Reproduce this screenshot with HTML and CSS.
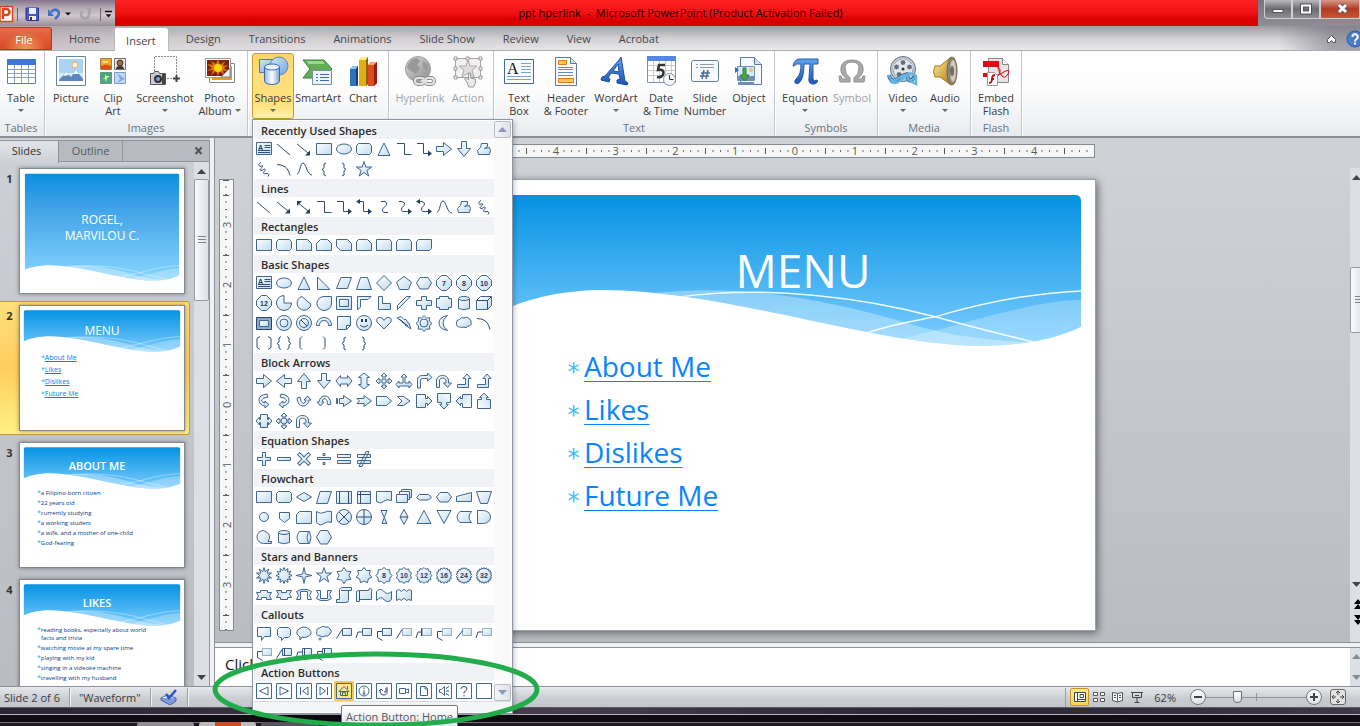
FILE: index.html
```html
<!DOCTYPE html>
<html lang="en">
<head>
<meta charset="utf-8">
<title>ppt hperlink - Microsoft PowerPoint</title>
<link rel="stylesheet" href="styles.css">
</head>
<body>
<svg class="defs" aria-hidden="true">
  <defs>
    <linearGradient id="fill" x1="0" y1="0" x2="1" y2="1"><stop offset="0" stop-color="#fff"/><stop offset="1" stop-color="#bfdcf0"/></linearGradient>
    <linearGradient id="blue" x1="0" y1="0" x2="1" y2="1"><stop offset="0" stop-color="#d5e7fa"/><stop offset="1" stop-color="#6ea4e0"/></linearGradient>
    <linearGradient id="cyl" x1="0" y1="0" x2="1" y2="0"><stop offset="0" stop-color="#8db9e8"/><stop offset=".5" stop-color="#fff"/><stop offset="1" stop-color="#7aa8dd"/></linearGradient>
    <linearGradient id="deep" x1="0" y1="0" x2="0" y2="1"><stop offset="0" stop-color="#5fa1ee"/><stop offset="1" stop-color="#1c53b5"/></linearGradient>
    <linearGradient id="gold" x1="0" y1="0" x2="1" y2="1"><stop offset="0" stop-color="#fff3a0"/><stop offset="1" stop-color="#b07a10"/></linearGradient>
    <linearGradient id="gray" x1="0" y1="0" x2="1" y2="1"><stop offset="0" stop-color="#d8d8d8"/><stop offset="1" stop-color="#8e8e8e"/></linearGradient>
    <linearGradient id="sky" gradientUnits="userSpaceOnUse" x1="0" y1="15" x2="0" y2="166"><stop offset="0" stop-color="#0592e2"/><stop offset="1" stop-color="#7ccdff"/></linearGradient>
    <linearGradient id="skytall" gradientUnits="userSpaceOnUse" x1="0" y1="-224" x2="0" y2="166"><stop offset="0" stop-color="#0a8fe0"/><stop offset=".3" stop-color="#3fa1e6"/><stop offset="1" stop-color="#86d6ff"/></linearGradient>
    <clipPath id="wave"><path d="M14 21q0-6 6-6H580q6 0 6 6V147C560 160 525 166 486 166C380 166 230 110 109 110C70 110 35 118 14 128Z"/></clipPath>
    <g id="swirl" clip-path="url(#wave)">
      <path fill="#fff" fill-opacity=".32" d="M160 113C250 104 330 118 432 149C470 158 500 161 540 163V200H160Z"/>
      <path fill="#fff" fill-opacity=".25" d="M405 159C470 145 530 122 586 120V200H405z"/>
      <path fill="none" stroke="#fff" stroke-width="1.5" stroke-opacity=".9" d="M185 117C270 105 370 118 440 137S510 155 545 164M362 156C400 143 420 141 440 137C490 122 540 113 586 111"/>
    </g>
    <symbol id="content-bg" viewBox="0 0 600 450" preserveAspectRatio="none">
      <path fill="url(#sky)" d="M14 21q0-6 6-6H580q6 0 6 6V147C560 160 525 166 486 166C380 166 230 110 109 110C70 110 35 118 14 128Z"/>
      <use href="#swirl"/>
    </symbol>
    <symbol id="title-bg" viewBox="0 0 600 450" preserveAspectRatio="none">
      <g transform="translate(0 239)">
        <path fill="url(#skytall)" d="M18-218q0-4 4-4H578q4 0 4 4V147C560 160 525 166 486 166C380 166 230 110 109 110C70 110 35 118 18 126Z"/>
        <use href="#swirl"/>
      </g>
    </symbol>
  </defs>
</svg>

<header class="titlebar">
  <div class="quick">
    <svg class="quick-art" viewBox="0 0 115 26" aria-hidden="true">
      <path d="M0 6.500h12.500v15H0z" fill="#fff" stroke="#d2491c" stroke-width="1.500"/>
      <path d="M3 19V9h3.500a2.800 2.800 0 0 1 0 6H3" fill="none" stroke="#d2491c" stroke-width="2.500"/>
      <path d="M17.500 8v13M100.500 8v13" stroke="#6b6473"/>
      <path d="M26 8h12.500v12.500H27l-1-1z" fill="#4a55c4" stroke="#2c3590"/><path d="M29 8h7v6h-7z" fill="#e8ecff"/><path d="M29 16h7v4h-7z" fill="#eee"/><path d="M30 17h2v3h-2z" fill="#333"/>
      <path d="M51 12q4-4 7-1t-3 8" fill="none" stroke="#3c6fd0" stroke-width="2.600"/><path d="M48 9v7h6z" fill="#3c6fd0"/>
      <path d="M65 12.500h6l-3 3z" fill="#111"/>
      <path d="M89 11v4a4 4 0 1 1-6-4" fill="none" stroke="#aaa4aa" stroke-width="2.600"/><path d="M85 8h6v6z" fill="#aaa4aa"/>
      <path d="M105 11.500h7" stroke="#111" stroke-width="1.500"/><path d="M105 14h7l-3.500 4z" fill="#111" stroke="#fff" stroke-width=".5"/>
    </svg>
  </div>
  <h1 class="window-title">ppt hperlink&nbsp; -&nbsp; Microsoft PowerPoint (Product Activation Failed)</h1>
  <div class="window-buttons">
    <button type="button" aria-label="Minimize"><svg width="12" height="12"><path d="M1 6.500h10v3H1z" fill="#fff" stroke="#555"/></svg></button>
    <button type="button" aria-label="Restore"><svg width="12" height="12"><path d="M2 2.500h8v7H2z" fill="none" stroke="#555" stroke-width="4"/><path d="M2 2.500h8v7H2z" fill="none" stroke="#fff" stroke-width="2"/></svg></button>
    <button type="button" class="close" aria-label="Close"><svg width="14" height="12"><path d="M3 2l7 7M10 2l-7 7" stroke="#555" stroke-width="5"/><path d="M3 2l7 7M10 2l-7 7" stroke="#fff" stroke-width="3"/></svg></button>
  </div>
</header>

<nav class="tabs">
  <button type="button" class="file">File</button>
  <button type="button">Home</button>
  <button type="button" class="active">Insert</button>
  <button type="button">Design</button>
  <button type="button">Transitions</button>
  <button type="button">Animations</button>
  <button type="button">Slide Show</button>
  <button type="button">Review</button>
  <button type="button">View</button>
  <button type="button">Acrobat</button>
  <span class="tabs-end">
    <svg width="12" height="10" viewBox="0 0 12 10"><path d="M1.500 8.500v-3l4-4 4 4v3h-2l-2-2-2 2z" fill="#fff" stroke="#555"/></svg>
    <svg width="14" height="18" viewBox="0 0 14 18"><circle cx="9" cy="9" r="8" fill="#4a7cc9" stroke="#2d5ca8"/><path d="M6.500 7a2.600 2.600 0 1 1 4 2Q9 10 9 11.500" fill="none" stroke="#fff" stroke-width="2"/><path d="M8 12.500h2v2H8z" fill="#fff"/></svg>
  </span>
</nav>

<section class="ribbon">
  <div class="group first">
    <div class="cmds">
      <button type="button" class="cmd"><svg class="ico" viewBox="0 0 32 32"><path d="M2.500 3.500h28v24h-28z" fill="#fff" stroke="#5a7fb5"/><path d="M2 3h29v6H2z" fill="#3d78d6"/><path d="M3 13.500h27M3 17.500h27M3 21.500h27M9.500 9v18M16.500 9v18M23.500 9v18" stroke="#8fa0b5"/></svg><span>Table</span><i class="caret"></i></button>
    </div>
    <h2>Tables</h2>
  </div>
  <div class="group">
    <div class="cmds images">
      <button type="button" class="cmd"><svg class="ico" viewBox="0 0 32 32"><path d="M1.500.5h29v29h-29z" fill="#fff" stroke="#64869f"/><path d="M4 3h24v22H4z" fill="#a9d4f5"/><path d="M4 17h24v8H4z" fill="#d8edfb"/><path d="M4 24l7-8 5 5 5-7 7 9v2H4z" fill="#5a86b9"/><path d="M8 20l3-4 3 3zM18 18l3-4 3 4z" fill="#fff"/><circle cx="20" cy="9" r="3" fill="#fff7d8" stroke="#eaa860"/></svg><span>Picture</span></button>
      <button type="button" class="cmd"><svg class="ico" viewBox="0 0 32 32"><path d="M3.500 2.500h11v11h-11z" fill="#f2a722" stroke="#a47a50"/><path d="M4 10q5-3 10 0v3H4z" fill="#d9501a"/><path d="M6 5h5v2H6z" fill="#ffe98a"/><path d="M17.500 2.500h11v11h-11z" fill="#e6e6e6" stroke="#777"/><circle cx="23" cy="7" r="3" fill="#b06a38" stroke="#333"/><path d="M19 13q0-3 4-3t4 3z" fill="#333"/><path d="M3.500 16.500h11v11h-11z" fill="#4ea582" stroke="#61967f"/><path d="M8 18v4h-3l3 1 1 3 1-4 3-2-4 0z" fill="#e7f78a"/><path d="M17.500 16.500h11v11h-11z" fill="#c3daf7" stroke="#7c9ccc"/><path d="M20 17l8 6-8 4 3-4z" fill="#7fa9e8"/></svg><span>Clip<br>Art</span></button>
      <button type="button" class="cmd w62"><svg class="ico" viewBox="0 0 32 32"><path d="M5.500 15V.5h22v22h-10" fill="none" stroke="#8b8b98" stroke-dasharray="2 1"/><path d="M24 22.500h7M27.500 19v7" stroke="#445" stroke-width="2"/><path d="M1.500 17.500h3l1-2h4l1 2h6v11h-15z" fill="#c9ccd3" stroke="#555"/><circle cx="9" cy="23" r="4" fill="#333"/><circle cx="9" cy="23" r="2" fill="#78a6d8"/><path d="M13 18h3v10h-3z" fill="#444"/></svg><span>Screenshot</span><i class="caret"></i></button>
      <button type="button" class="cmd w48"><svg class="ico" viewBox="0 0 32 32"><path d="M5.500 7.500h25v19h-25z" fill="#fff" stroke="#888"/><path d="M8 10h20v14H8z" fill="#ee9b16"/><path d="M1.500 2.500h25v19h-25z" fill="#fff" stroke="#999"/><path d="M3 4h22v16H3z" fill="#7b2208"/><path d="M14 3l2 6 5-4-2 5 6-1-5 3 5 4-6-2 1 5-4-4-2 5-2-5-5 4 2-5-6 1 5-3-5-4 6 1-2-4 5 3z" fill="#e07410"/><circle cx="14" cy="12" r="4" fill="#f5d60c"/><path d="M17 21l9-9v9z" fill="#eef2f8" stroke="#888"/></svg><span>Photo<br>Album <i class="caret inline"></i></span></button>
    </div>
    <h2>Images</h2>
  </div>
  <div class="group">
    <div class="cmds">
      <div class="dropdown">
        <button type="button" class="cmd pressed" aria-expanded="true"><svg class="ico" viewBox="0 0 32 32"><path d="M2.500 3.500h16v13h-16z" fill="url(#blue)" stroke="#5279ad"/><circle cx="22" cy="10" r="9" fill="url(#blue)" stroke="#5a86c0"/><path d="M7.500 11v14a7.500 3.500 0 0 0 15 0V11z" fill="url(#cyl)" stroke="#3f6bab"/><ellipse cx="15" cy="11" rx="7.500" ry="3" fill="#e9f3fd" stroke="#3f6bab"/></svg><span>Shapes</span><i class="caret"></i></button>
        <div class="menu" role="menu">
          <div class="menu-body">
            <div class="gallery" id="gallery"></div>
            <div class="menu-scroll">
              <button type="button" aria-label="Scroll up"><svg width="9" height="5"><path d="M0 5l4.500-5L9 5z" fill="#8b97c0"/></svg></button>
              <button type="button" aria-label="Scroll down"><svg width="9" height="5"><path d="M0 0l4.500 5L9 0z" fill="#8b97c0"/></svg></button>
            </div>
          </div>
          <div class="menu-grip"></div>
          <div class="tooltip" role="tooltip">Action Button: Home</div>
          <svg class="marker" viewBox="0 0 328 77" aria-hidden="true"><ellipse cx="164" cy="38.500" rx="161" ry="35.500" fill="none" stroke="#22ac4b" stroke-width="5"/></svg>
        </div>
      </div>
      <button type="button" class="cmd w48"><svg class="ico" viewBox="0 0 32 32"><path d="M1 4h21l8 9-8 9H1l7-9z" fill="#63ad55" stroke="#3c8341"/><path d="M4 5h17l2 3H7z" fill="#a2d58b"/><path d="M10.500 14.500h19v14h-19z" fill="#eef4f9" stroke="#7690a5"/><path d="M14 18.500h2M14 21.500h2M14 24.500h2M18 18.500h9M18 21.500h9M18 24.500h9" stroke="#456ea8"/></svg><span>SmartArt</span></button>
      <button type="button" class="cmd"><svg class="ico" viewBox="0 0 32 32"><path d="M3 13l3-3h5v20H3z" fill="#2f73b8"/><path d="M3 13l3-3h5l-2 3z" fill="#8ec6f0"/><path d="M9 13l2-3v18l-2 2z" fill="#153f73"/><path d="M12 4l3-3h6v27l-2 2h-7z" fill="#e0b010"/><path d="M12 4l3-3h6l-2 3z" fill="#fff07a"/><path d="M19 4l2-3v27l-2 2z" fill="#8b6406"/><path d="M21 9l3-3h6v21l-3 3h-6z" fill="#dd4a1f"/><path d="M21 9l3-3h6l-3 3z" fill="#ffa07a"/><path d="M27 9l3-3v21l-3 3z" fill="#931f06"/></svg><span>Chart</span></button>
    </div>
  </div>
  <div class="group">
    <div class="cmds">
      <button type="button" class="cmd w54" disabled><svg class="ico" viewBox="0 0 32 32"><circle cx="14" cy="13" r="12.500" fill="url(#gray)" stroke="#9c9c9c"/><path d="M4 8q3-6 9-6l3 3-3 4 3 3-4 6-5-3-4-3zM19 5l5 4-1 7-4-5z" fill="#999"/><g fill="none" stroke="#8e8e8e" stroke-width="4"><rect x="11" y="22" width="9" height="6" rx="3"/><rect x="21" y="22" width="9" height="6" rx="3"/></g><g fill="none" stroke="#e4e4e4" stroke-width="2"><rect x="11" y="22" width="9" height="6" rx="3"/><rect x="21" y="22" width="9" height="6" rx="3"/><path d="M17 25h7"/></g></svg><span>Hyperlink</span></button>
      <button type="button" class="cmd" disabled><svg class="ico" viewBox="0 0 32 32"><path d="M3.500 2.500h25v19h-25z" fill="#f3eeef" stroke="#a5a5a5"/><path d="M16 4l2 6h7l-5 4 2 7-6-4-6 4 2-7-5-4h7z" fill="#e2dde0" stroke="#aaa"/><path d="M2 1h3v3H2zM14 1h3v3h-3zM27 1h3v3h-3zM2 11h3v3H2zM27 11h3v3h-3zM2 20h3v3H2zM27 20h3v3h-3z" fill="#f5f5f5" stroke="#999"/><path d="M15.500 27l-3-4 2-1 2 2v-7h2v5l5 1v4l-2 4h-5z" fill="#e9e9e9" stroke="#999"/></svg><span>Action</span></button>
    </div>
  </div>
  <div class="group">
    <div class="cmds">
      <button type="button" class="cmd"><svg class="ico" viewBox="0 0 32 32"><path d="M1.500 3.500h29v24h-29z" fill="#f9fcff" stroke="#456a91"/><text x="4" y="18" class="serif" font-size="16">A</text><path d="M18 7.500h10M18 10.500h10M18 13.500h10M18 16.500h10M4 20.500h24M4 23.500h24" stroke="#7ea0d4"/></svg><span>Text<br>Box</span></button>
      <button type="button" class="cmd w52"><svg class="ico" viewBox="0 0 32 32"><path d="M5.500 1.500h15l6 6v22h-21z" fill="#f7fbff" stroke="#5a7ba5"/><path d="M20.500 1.500v6h6" fill="#cfe0f5" stroke="#5a7ba5"/><path d="M8.500 4.500h8v4h-8zM8.500 22.500h15v4h-15z" fill="#ffc36c" stroke="#de7b16"/><path d="M8 11.500h15M8 13.500h15M8 16.500h15M8 19.500h15" stroke="#6b87b4"/></svg><span>Header<br>&amp; Footer</span></button>
      <button type="button" class="cmd w48"><svg class="ico" viewBox="0 0 32 32"><path d="M21 1l4 24 3 2-1 2-10-2v-3l3-1-1-5-8-1-3 5 2 1-1 3-8-2 1-3 3-1L19 4zM18 8l-5 7 6 1z" fill="url(#deep)" stroke="#1b4c9c"/></svg><span>WordArt</span><i class="caret"></i></button>
      <button type="button" class="cmd"><svg class="ico" viewBox="0 0 32 32"><path d="M2.500.5h28v26h-28z" fill="#fff" stroke="#7490bb"/><path d="M2 0h29v5H2z" fill="#5487e4"/><path d="M3 9.500h27M3 14.500h27M3 19.500h27M8.500 5v21M14.500 5v21M20.500 5v21M26.500 5v21" stroke="#c3cad4"/><path d="M20 9h-6l-1 5q7-1 5 5-2 3-6 2" fill="none" stroke="#333" stroke-width="2.500"/><circle cx="24.500" cy="23.500" r="6" fill="#f6f8fa" stroke="#8693a5"/><path d="M24.500 19v4.500h4" fill="none" stroke="#333"/></svg><span>Date<br>&amp; Time</span></button>
      <button type="button" class="cmd w46"><svg class="ico" viewBox="0 0 32 32"><rect x="2.500" y="4.500" width="27" height="21" rx="2" fill="#f6f9fd" stroke="#607d9e"/><path d="M7 8.500h2M7 11.500h2M11 8.500h14M11 11.500h14" stroke="#8c9bb0"/><path d="M15 14l-2 9M19 14l-2 9M12 17h9M11 20h9" stroke="#486f9f" stroke-width="1.500"/></svg><span>Slide<br>Number</span></button>
      <button type="button" class="cmd"><svg class="ico" viewBox="0 0 32 32"><path d="M7.500 1.500h14l7 7v20h-21z" fill="#f6faff" stroke="#5a7ba5"/><path d="M21.500 1.500v7h7" fill="#cfe0f5" stroke="#5a7ba5"/><path d="M4.500 10.500h17v14h-17z" fill="#d9eafa" stroke="#6f8fb6"/><circle cx="18" cy="14" r="2" fill="#f5c25b"/><path d="M5 20h16v4H5zM5 26h16v3H5z" fill="#6b8db8"/><path d="M10 12h3v7h3l-4.500 6L7 19h3z" fill="#4fa64a" stroke="#2f7f35"/><path d="M2 11l4 3-4 3z" fill="#2d64d0"/></svg><span>Object</span></button>
    </div>
    <h2>Text</h2>
  </div>
  <div class="group">
    <div class="cmds">
      <button type="button" class="cmd w52"><svg class="ico" viewBox="0 0 32 32"><path d="M4 10q1-6 6-7h19v5h-5v15q1 3 4 1l1 1q-2 4-6 3-4-1-3-6l1-14h-6q0 13-4 18-2 3-5 1-1-3 2-5 4-4 4-14-5-1-7 2z" fill="url(#deep)" stroke="#2b5cae"/></svg><span>Equation</span><i class="caret"></i></button>
      <button type="button" class="cmd" disabled><svg class="ico" viewBox="0 0 32 32"><path d="M3 20h2l1 3h5q-7-5-6-11 1-8 11-8t11 8q1 6-6 11h5l1-3h2l-1 6H18v-4q5-4 5-10 0-6-7-6t-7 6q0 6 5 10v4H4z" fill="#aaa" stroke="#8f8f8f"/></svg><span>Symbol</span></button>
    </div>
    <h2>Symbols</h2>
  </div>
  <div class="group">
    <div class="cmds">
      <button type="button" class="cmd"><svg class="ico" viewBox="0 0 32 32"><circle cx="16" cy="13" r="12.500" fill="#c5cbd3" stroke="#68727f"/><circle cx="16" cy="13" r="10" fill="#e2e6ea" stroke="#9aa4b0"/><g fill="#65717f" stroke="#eef1f4"><circle cx="16" cy="6.500" r="3"/><circle cx="22.500" cy="11" r="3"/><circle cx="20" cy="18.500" r="3"/><circle cx="12" cy="18.500" r="3"/><circle cx="9.500" cy="11" r="3"/></g><circle cx="16" cy="13" r="1.500" fill="#333"/><path d="M2 19q2 9 10 3t9 0 8-2" fill="none" stroke="#2f5f85" stroke-width="4"/><path d="M2 19q2 9 10 3t9 0 8-2M3 25q6 5 13-3t13-2v8l-6-3" fill="none" stroke="#63b4e2" stroke-width="2.500"/></svg><span>Video</span><i class="caret"></i></button>
      <button type="button" class="cmd"><svg class="ico" viewBox="0 0 32 32"><path d="M6 10h5L22 1v28L11 21H6q-3-5 0-11z" fill="url(#gold)" stroke="#a97818"/><ellipse cx="23" cy="15" rx="5" ry="14" fill="#8e8475" stroke="#76664d"/><ellipse cx="24" cy="15" rx="3" ry="11" fill="#cfc9bf"/><ellipse cx="23" cy="15" rx="2" ry="5" fill="#716a60"/></svg><span>Audio</span><i class="caret"></i></button>
    </div>
    <h2>Media</h2>
  </div>
  <div class="group">
    <div class="cmds">
      <button type="button" class="cmd"><svg class="ico" viewBox="0 0 32 32"><path d="M8.500 2.500h14l6 6v18h-20z" fill="#e5e5e5" stroke="#888"/><path d="M22.500 2.500v6h6" fill="#fff" stroke="#888"/><path d="M3 5h16v6H3zM3 17h9v4H3z" fill="#e30613"/><path d="M17 20q5-5 2-8t1 5 8 1-6-1-8 4" fill="none" stroke="#e30613"/><path d="M7.500 16.500h7l3 3v10h-10z" fill="#fff" stroke="#999"/><path d="M15 19q-3 0-3 4t-3 4M11 23h3" fill="none" stroke="#d20a14" stroke-width="1.800"/></svg><span>Embed<br>Flash</span></button>
    </div>
    <h2>Flash</h2>
  </div>
</section>

<main class="work">
  <aside class="panel">
    <div class="panel-tabs">
      <button type="button" class="active">Slides</button>
      <button type="button">Outline</button>
      <button type="button" class="panel-close" aria-label="Close pane"><svg width="10" height="10"><path d="M1.500 1.500l6 6.500M7.500 1.500l-6 6.500" stroke="#555" stroke-width="2"/></svg></button>
    </div>
    <div class="panel-body">
      <ol class="thumbs">
        <li><b>1</b><div class="thumb title"><svg><use href="#title-bg"/></svg><div class="thumb-text"><h3>ROGEL,<br>MARVILOU C.</h3></div></div></li>
        <li class="selected"><b>2</b><div class="thumb links"><svg><use href="#content-bg"/></svg><div class="thumb-text"><h3>MENU</h3><ul><li><u>About Me</u></li><li><u>Likes</u></li><li><u>Dislikes</u></li><li><u>Future Me</u></li></ul></div></div></li>
        <li><b>3</b><div class="thumb"><svg><use href="#content-bg"/></svg><div class="thumb-text"><h3>ABOUT ME</h3><ul><li>a Filipino-born citizen</li><li>22 years old</li><li>currently studying</li><li>a working student</li><li>a wife, and a mother of one-child</li><li>God-fearing</li></ul></div></div></li>
        <li><b>4</b><div class="thumb"><svg><use href="#content-bg"/></svg><div class="thumb-text"><h3>LIKES</h3><ul><li>reading books, especially about world<br>facts and trivia</li><li>watching movie at my spare time</li><li>playing with my kid</li><li>singing in a videoke machine</li><li>travelling with my husband</li></ul></div></div></li>
      </ol>
      <div class="panel-scroll">
        <svg width="9" height="5"><path d="M0 5l4.500-5L9 5z" fill="#444"/></svg>
        <span class="panel-grab"></span>
        <svg class="down-arrow" width="9" height="5"><path d="M0 0l4.500 5L9 0z" fill="#444"/></svg>
      </div>
    </div>
  </aside>

  <section class="editor">
    <div class="stage">
      <div class="canvas">
        <div class="ruler across"><span></span><span>4</span><span>3</span><span>2</span><span>1</span><span>0</span><span>1</span><span>2</span><span>3</span><span>4</span><span></span></div>
        <div class="ruler down"><span></span><span>3</span><span>2</span><span>1</span><span>0</span><span>1</span><span>2</span><span>3</span><span></span></div>
        <article class="slide">
          <svg><use href="#content-bg"/></svg>
          <div class="slide-text">
            <h2>MENU</h2>
            <ul>
              <li><a href="#about">About Me</a></li>
              <li><a href="#likes">Likes</a></li>
              <li><a href="#dislikes">Dislikes</a></li>
              <li><a href="#future">Future Me</a></li>
            </ul>
          </div>
        </article>
      </div>
      <div class="stage-scroll">
        <svg width="10" height="5"><path d="M2 5l4.500-5L11 5z" fill="#444"/></svg>
        <span class="stage-grab"></span>
        <svg class="down-arrow" width="10" height="5"><path d="M2 0l4.500 5L11 0z" fill="#444"/></svg>
        <svg class="pages" width="10" height="28"><path d="M4 5l4-5 4 5zM4 10l4-5 4 5zM4 16h8l-4 5zM4 21h8l-4 5z" fill="#000"/></svg>
      </div>
    </div>
    <div class="notes">
      <p>Click</p>
      <div class="notes-scroll"><svg width="10" height="5"><path d="M2 5l4.500-5L11 5z" fill="#7f8f8f"/></svg><svg width="10" height="5"><path d="M2 0l4.500 5L11 0z" fill="#7f8f8f"/></svg></div>
    </div>
  </section>
</main>

<footer class="status">
  <span class="cell">Slide 2 of 6</span>
  <span class="cell">"Waveform"</span>
  <span class="cell"><svg width="18" height="16" viewBox="0 0 18 16"><path d="M1 9l6-3 9 3-6 5z" fill="#eef3ff" stroke="#4a6fc0"/><path d="M1 9v2l9 5 6-4v-3" fill="#7e9bdc" stroke="#3b5fb4"/><path d="M6 5l3 4 7-8" fill="none" stroke="#2c54c8" stroke-width="2.500"/></svg></span>
  <span class="views">
    <button type="button" class="on" aria-label="Normal"><svg width="14" height="12"><path d="M1.500 1.500h11v9h-11z" fill="#fff" stroke="#444"/><path d="M4.500 1v10M7 3.500h3.500v3H7zM5 8.500h7" fill="none" stroke="#444"/></svg></button>
    <button type="button" aria-label="Slide sorter"><svg width="12" height="12"><path d="M.5 1.500h4v3h-4zM7.500 1.500h4v3h-4zM.5 7.500h4v3h-4zM7.500 7.500h4v3h-4z" fill="#fff" stroke="#555"/></svg></button>
    <button type="button" aria-label="Reading view"><svg width="12" height="12"><path d="M.5 1.500l5 1 5-1v8l-5 1.500-5-1.500zM5.500 2.500v8M2 4.500h2M2 6.500h2M7 4.500h2M7 6.500h2" fill="#fff" stroke="#555"/></svg></button>
    <button type="button" aria-label="Slide show"><svg width="12" height="12"><path d="M0 1.500h12M1.500 2v4.500h9V2M6 7v4M3.500 11.500h5M4 4.500h4" fill="none" stroke="#444"/></svg></button>
  </span>
  <label class="zoom-label" for="zoom">62%</label>
  <button type="button" class="round" aria-label="Zoom out"><svg width="10" height="10"><path d="M1 5h8" stroke="#444" stroke-width="2"/></svg></button>
  <input id="zoom" class="zoom" type="range" min="0" max="100" value="30">
  <button type="button" class="round" aria-label="Zoom in"><svg width="10" height="10"><path d="M1 5h8M5 1v8" stroke="#444" stroke-width="2"/></svg></button>
  <button type="button" class="fit" aria-label="Fit slide to window"><svg width="12" height="12"><path d="M6 0v4M4 2l2-2 2 2M6 12V8M4 10l2 2 2-2M0 6h4M2 4L0 6l2 2M12 6H8M10 4l2 2-2 2" fill="none" stroke="#444"/></svg></button>
</footer>
<div class="frame"></div>
<div class="taskbar"><span></span><span class="hot"></span><span class="dim"></span></div>
<script src="gallery.js"></script>
</body>
</html>
```

FILE: styles.css
```css
* { box-sizing: border-box; }
body {
  margin: 0;
  height: 100vh;
  display: flex;
  flex-direction: column;
  overflow: hidden;
  background: #18141c;
  font: 11px/13px "Open Sans", "Noto Sans", sans-serif;
  color: #3b3b3b;
}
button { font: inherit; color: inherit; margin: 0; padding: 0; border: 0; background: none; }
h1, h2, h3, p, ul, ol { margin: 0; padding: 0; font-weight: normal; list-style: none; }
.defs { position: absolute; width: 0; height: 0; }

/* title bar */
.titlebar { display: flex; height: 26px; flex: none; background: linear-gradient(#a79fb0, #8e858f); }
.quick { width: 115px; flex: none; background: linear-gradient(#85758a 0, #b5a9b4 30%, #cfc6cc 60%, #9a8d98 100%); }
.quick-art { display: block; width: 115px; height: 26px; }
.window-title {
  flex: 1;
  padding-right: 12px;
  text-align: center;
  font-size: 11px;
  line-height: 26px;
  color: #1a0000;
  background: linear-gradient(#ff2222, #f01212 50%, #d90000 75%, #d90000);
}
.window-buttons { width: 102px; flex: none; display: flex; padding: 0 0 7px 6px; background: linear-gradient(#777580, #8f8d95); }
.window-buttons button { width: 28px; display: grid; place-items: center; border: 1px solid #d0d0d4; border-top: 0; background: linear-gradient(#b9b9bd, #6c6b72 50%, #8f8e95); }
.window-buttons button:first-child { border-radius: 0 0 0 4px; }
.window-buttons .close { flex: 1; padding-left: 6px; background: linear-gradient(#d69787, #b13a24 50%, #c9553a); }

/* ribbon tabs */
.tabs {
  display: flex;
  flex: none;
  height: 25px;
  padding-top: 1px;
  border-bottom: 1px solid #a9adb3;
  background: linear-gradient(90deg, #b7a8b2aa 0, #d0c8cd66 15%, transparent 60%, transparent 94%, #77748099 98%), linear-gradient(#9a9aa0, #cfcfd2 50%, #ececed);
}
.tabs button { padding: 0 14px; line-height: 23px; color: #454449; }
.tabs .file { width: 52px; padding: 0 3px 0 0; margin-right: 3px; color: #fff; border: 1px solid #b03c1c; border-left: 0; border-radius: 0 3px 0 0; background: radial-gradient(ellipse at 50% 100%, #f49a58, transparent 60%), linear-gradient(#e8694a, #d84a26); }
.tabs .active { height: 25px; margin: 0 3px 0 0; padding: 0 12px 0 11px; border: 1px solid #b5b9be; border-bottom: 0; border-radius: 3px 3px 0 0; background: #fff; }
.tabs-end { margin-left: auto; display: flex; align-items: center; gap: 8px; }

/* ribbon */
.ribbon { display: flex; flex: none; height: 87px; border-bottom: 2px solid #8c9095; background: linear-gradient(#fff 0, #fdfdfd 45%, #e8ebef 100%); }
.group { display: flex; flex-direction: column; justify-content: space-between; padding: 2px 4px 1px; border-right: 1px solid #c3c8ce; box-shadow: 1px 0 #fff; }
.group.first { padding-left: 0; padding-right: 2px; }
.cmds { display: flex; }
.cmds.images { padding-left: 1px; }
.cmds.images .w48 { width: 47px; }
.group h2 { text-align: center; font-size: 11px; line-height: 14px; color: #6a7280; }
.cmd { display: flex; flex-direction: column; align-items: center; width: 42px; min-height: 66px; padding: 2px 0; border: 1px solid transparent; border-radius: 3px; white-space: nowrap; }
.cmd.w46 { width: 46px; }
.cmd.w48 { width: 48px; }
.cmd.w52 { width: 52px; }
.cmd.w54 { width: 54px; }
.cmd.w62 { width: 62px; }
.cmd:disabled { color: #a3a3a5; }
.cmd.pressed { border-color: #c29b35; background: linear-gradient(#fbd46b, #ffdf7d 40%, #ffe07a 75%, #fff0a0); }
.ico { width: 32px; height: 32px; margin-bottom: 3px; flex: none; }
.ico .serif { font-family: "Liberation Serif", serif; fill: #111; }
.caret { width: 0; height: 0; margin-top: 5px; border: 3px solid transparent; border-top-color: #6a6a6a; border-bottom: 0; }
.caret.inline { display: inline-block; margin: 0; vertical-align: 3px; }

/* shapes menu */
.dropdown { position: relative; }
.menu { position: absolute; z-index: 5; left: 0; top: 66px; width: 261px; padding: 1px; border: 1px solid #8d96a3; background: #fff; box-shadow: 2px 2px 4px #0003; }
.menu-body { display: flex; justify-content: space-between; }
.gallery { width: 240px; }
.gallery h3 { padding: 2px 0 0 7px; background: #f0f2f5; font-weight: 600; line-height: 16px; color: #2b2b2b; font-size: 11px; }
.gallery-grid { display: grid; grid-template-columns: repeat(12, 20px); grid-auto-rows: 20px; }
.gallery-grid button { display: grid; place-items: center; border-radius: 2px; }
.gallery-grid .hover { background: #ffe58c; box-shadow: inset 0 0 0 2px #f0cb4a; }
.gallery svg { width: 16px; height: 16px; fill: url(#fill); stroke: #41668f; stroke-width: 1; overflow: visible; }
.gallery .plain svg { fill: #fff; }
.gallery .plain .hover svg { fill: #ffe58c; }
.gallery .line { fill: none; stroke: #2f4d78; }
.gallery .head { fill: #263f66; stroke: none; }
.gallery .dot { stroke-dasharray: 1 1; }
.gallery text { fill: #1d3a62; stroke: none; font: bold 7px "Liberation Sans", sans-serif; text-anchor: middle; }
.menu-scroll { width: 17px; display: flex; flex-direction: column; justify-content: space-between; background: #fafafa; }
.menu-scroll button { height: 17px; display: grid; place-items: center; border: 1px solid #b9bcc2; border-radius: 2px; background: linear-gradient(90deg, #f4f5f8, #dfe1e8); }
.menu-grip { height: 11px; border-top: 1px solid #d9dce2; background: #f4f5f7; }
.tooltip { position: absolute; left: 88px; top: 585px; padding: 4px; border: 1px solid #767676; border-radius: 2px; background: linear-gradient(#fff, #e4e5f0); color: #575757; line-height: 13px; white-space: nowrap; }
.marker { position: absolute; left: -41px; top: 531px; width: 328px; height: 77px; }

/* work area */
.work { flex: 1; min-height: 0; display: flex; background: #c6cacf; }
.panel { width: 214px; flex: none; display: flex; flex-direction: column; padding-top: 2px; border-right: 4px solid #f1f2f4; background: linear-gradient(#cdd0d4, #b9bdc1); }
.panel-tabs { display: flex; flex: none; height: 22px; border-top: 1px solid #8d979b; border-bottom: 1px solid #8d979b; border-right: 1px solid #8d979b; background: #b7bbc0; }
.panel-tabs button { border-right: 1px solid #8d979b; line-height: 18px; width: 64px; color: #555962; }
.panel-tabs .active { width: 59px; height: 22px; padding: 0 5px 3px 0; background: linear-gradient(#e1e4e8, #cdd0d4); color: #333; }
.panel-tabs .panel-close { width: 20px; margin-left: auto; border: 0; display: grid; place-items: center; }
.panel-body { flex: 1; min-height: 0; display: flex; justify-content: space-between; border-right: 1px solid #8d979b; }
.thumbs { width: 190px; padding-top: 2px; overflow: hidden; }
.thumbs > li { display: flex; height: 134px; margin-bottom: 3px; padding: 3px 4px 3px 0; border: 1px solid transparent; border-left: 0; border-radius: 0 3px 3px 0; }
.thumbs > li > b { width: 19px; padding-top: 4px; text-align: center; flex: none; color: #333; }
.thumbs .selected { border-color: #c2993a; background: linear-gradient(#ffe07a, #fdce5f 50%, #fff183); }
.thumb { display: grid; width: 167px; height: 126px; border: 1px solid #85898e; background: #fff; box-shadow: 0 0 4px #0006; overflow: hidden; color: #063a80; }
.thumb > svg, .thumb-text { grid-area: 1 / 1; min-width: 0; }
.thumb > svg { width: 100%; height: 100%; }
.thumb-text { padding: 16px 17px 0; font-size: 6px; line-height: 8px; }
.thumb h3 { margin: 0 10px 16px 0; color: #fff; text-align: center; font-size: 11px; line-height: 14px; font-weight: 600; }
.thumb li { margin-bottom: 2px; padding-left: 4px; white-space: nowrap; }
.thumb li::before { content: "*"; margin-left: -4px; color: #28aaf0; font-size: 7px; }
.thumb.title .thumb-text { padding-top: 43px; }
.thumb.title h3 { margin: 0; font-size: 12px; line-height: 16px; font-weight: normal; }
.thumb.links h3 { margin: 0 4px 15px 0; font-size: 12px; font-weight: normal; line-height: 17px; }
.thumb.links .thumb-text { padding-left: 21px; font-size: 7px; color: #0080ff; }
.thumb.links li { margin-bottom: 4px; }
.panel-scroll { width: 15px; display: flex; flex-direction: column; align-items: center; padding-top: 7px; background: #dcdfe6; }
.panel-grab { width: 15px; height: 122px; margin-top: 5px; border: 1px solid #949aa5; border-radius: 2px; background: repeating-linear-gradient(#7d828c 0 1px, transparent 1px 3px) 50% 50% / 8px 8px no-repeat, linear-gradient(90deg, #fafbfc, #dcdfe6); }
.panel-scroll .down-arrow { margin: auto 0 6px; }

.editor { flex: 1; min-width: 0; display: flex; flex-direction: column; border-left: 1px solid #8d9197; background: #f1f2f4; }
.stage { flex: 1; min-height: 0; display: flex; border-bottom: 1px solid #8d9197; background: linear-gradient(#cfd2d6, #b9bdc1); }
.canvas { flex: 1; min-width: 0; display: grid; grid-template: 14px auto / 15px 1fr; row-gap: 21px; align-content: start; padding: 6px 0 0 4px; }
.ruler { display: flex; border: 1px solid #858a92; background: #f7f7f7; font-size: 11px; line-height: 12px; color: #5a5a5a; overflow: hidden; }
.ruler span { flex: 4; text-align: center; }
.across { grid-column: 2; width: 100%; max-width: 600px; justify-self: center; margin-left: 6px; }
.across span { background: linear-gradient(#f7f7f7, #f7f7f7) 50% 0 / 10px 100% no-repeat, linear-gradient(#555, #555) 0 50% / 1px 6px no-repeat, linear-gradient(90deg, #666 1px, transparent 1px) 0 50% / 12.5% 2px repeat-x; }
.across span:first-child, .across span:last-child { flex: 2; background: linear-gradient(#555, #555) 0 50% / 1px 6px no-repeat, linear-gradient(90deg, #666 1px, transparent 1px) 0 50% / 25% 2px repeat-x; }
.down { grid-row: 2; grid-column: 1; flex-direction: column; }
.down span { display: grid; place-items: center; writing-mode: vertical-rl; transform: rotate(180deg); background: linear-gradient(#f7f7f7, #f7f7f7) 0 50% / 100% 10px no-repeat, linear-gradient(#555, #555) 50% 100% / 6px 1px no-repeat, linear-gradient(#666 1px, transparent 1px) 50% 0 / 2px 12.5% repeat-y; }
.down span:first-child, .down span:last-child { flex: 1; background: linear-gradient(#555, #555) 50% 100% / 6px 1px no-repeat, linear-gradient(#666 1px, transparent 1px) 50% 0 / 2px 50% repeat-y; }
.slide { grid-column: 2; grid-row: 2; justify-self: center; width: 100%; max-width: 602px; margin-left: 6px; aspect-ratio: 4 / 3; display: grid; border: 1px solid #9ca1a8; background: #fff; box-shadow: 2px 2px 8px #0007; }
.slide > svg, .slide-text { grid-area: 1 / 1; }
.slide > svg { width: 100%; height: 100%; }
.slide-text { padding: 60px 0 0 72px; }
.slide h2 { margin: 0 56px 45px 0; text-align: center; color: #fff; font-size: 46px; line-height: 60px; }
.slide li { display: flex; align-items: center; gap: 4px; height: 43px; font-size: 28px; line-height: 43px; }
.slide li::before { content: "*"; width: 13px; height: 34px; color: #3fbdf5; text-align: center; font-family: "DejaVu Sans", sans-serif; font-size: 24px; line-height: 44px; }
.slide li a { color: #0a84ff; text-decoration-thickness: 1px; text-underline-offset: 4px; }
.stage-scroll { width: 10px; display: flex; flex-direction: column; padding: 37px 0 0; background: linear-gradient(transparent 30px, #dcdfe6 30px); overflow: hidden; }
.stage-grab { width: 14px; height: 66px; margin-top: 87px; border: 1px solid #949aa5; border-radius: 2px; background: repeating-linear-gradient(#7d828c 0 1px, transparent 1px 3px) 4px 50% / 8px 8px no-repeat, linear-gradient(90deg, #fafbfc, #dcdfe6); }
.stage-scroll .down-arrow { margin-top: auto; margin-bottom: 12px; flex: none; }
.stage-scroll .pages { margin-bottom: 15px; flex: none; }
.notes { display: flex; justify-content: space-between; flex: none; height: 39px; margin-top: 4px; border-top: 1px solid #8d9197; background: #fff; }
.notes p { padding: 6px 10px; font-size: 15px; line-height: 20px; color: #111; }
.notes-scroll { width: 10px; display: flex; flex-direction: column; justify-content: space-between; padding: 6px 0; background: #dcdfe6; overflow: hidden; }

/* status bar */
.status { display: flex; align-items: center; flex: none; height: 22px; padding-right: 14px; border-top: 1px solid #8d9197; border-bottom: 1px solid #5b5d63; background: linear-gradient(#e6e8eb, #c9ccd1 60%, #c2c5ca); }
.cell { display: flex; align-items: center; height: 18px; padding: 0 9px; border-right: 1px solid #9a9ea5; box-shadow: 1px 0 #f2f3f5; }
.cell:first-child { padding-left: 4px; }
.views { display: flex; align-items: center; height: 19px; margin-left: auto; padding-left: 4px; border-left: 1px solid #9a9ea5; }
.views button { width: 19px; height: 18px; display: grid; place-items: center; }
.views .on { border: 1px solid #c8952b; border-radius: 2px; background: linear-gradient(#ffe79a, #ffd34f); }
.zoom-label { margin: 0 14px 0 8px; }
.round { width: 16px; height: 16px; flex: none; display: grid; place-items: center; border: 1px solid #73777f; border-radius: 50%; background: linear-gradient(#fff, #dfe1e5); }
.zoom { appearance: none; width: 100px; height: 16px; margin: 0; background: linear-gradient(#8f949e, #8f949e) 50% 50% / 100% 1px no-repeat, linear-gradient(#8f949e, #8f949e) 50% 50% / 1px 8px no-repeat; }
.zoom::-webkit-slider-thumb { appearance: none; width: 9px; height: 12px; border: 1px solid #6b7079; border-radius: 1px 1px 5px 5px; background: linear-gradient(#fff, #dcdfe4); }
.fit { width: 16px; height: 16px; margin-left: 8px; display: grid; place-items: center; border: 1px solid #666; border-radius: 3px; background: #e3e3e3; }
.frame { flex: none; height: 7px; border-bottom: 1px solid #b9b5bf; background: linear-gradient(90deg, #2b2433, #473d4d 40%, #2b2536 70%, #40374a); }
.taskbar { flex: none; display: flex; align-items: flex-end; height: 11px; padding-left: 137px; background: linear-gradient(#0e0c11 7px, #77717a 7px 8px, #1d1822 8px); }
.taskbar span { width: 57px; height: 4px; margin-right: 5px; border-radius: 3px 3px 0 0; background: #8f8d93; }
.taskbar .hot { background: linear-gradient(90deg, #bbb 16px, #c84f22 16px 42px, #bbb 42px); }
.taskbar .dim { background: #55525a; }
```

FILE: gallery.js
```js
const F = (d) => `<path d="${d}"/>`;
const L = (d) => `<path class="line" d="${d}"/>`;
const H = (d) => `<path class="head" d="${d}"/>`;
const D = (d) => `<path class="dot" d="${d}"/>`;
const rot = (a, s) => `<g transform="rotate(${a} 8 8)">${s}</g>`;
const flip = (s) => `<g transform="matrix(-1 0 0 1 16 0)">${s}</g>`;
const T = (t) => `<text x="8" y="11">${t}</text>`;
const C = (r, cx = 8, cy = 8) => `<circle cx="${cx}" cy="${cy}" r="${r}"/>`;
const E = (rx, ry) => `<ellipse cx="8" cy="8" rx="${rx}" ry="${ry}"/>`;
const star = (n, R, r) => {
  const p = [];
  for (let i = 0; i < n * 2; i++) {
    const a = (Math.PI * i) / n - Math.PI / 2;
    const q = i % 2 ? r : R;
    p.push(`${(8 + q * Math.cos(a)).toFixed(1)} ${(8.5 + q * Math.sin(a)).toFixed(1)}`);
  }
  return F(`M${p.join("L")}Z`);
};

const rect = F("M.5 2.500h15v11h-15z");
const round = F("M2.500 2.500h11l2 2v7l-2 2h-11l-2-2v-7z");
const textBox = F("M.5 1.500h15v12H.5z") + `<text x="4.500" y="8.500">A</text>` + L("M8.500 4.500h6M8.500 6.500h6M2 9.500h12M2 11.500h12");
const tri = F("M8 2L14 14.500H2z");
const line = L("M1 3L14 14");
const arrow = L("M1 3L12 12") + H("M14 14.500v-5l-5 5z");
const doubleArrow = arrow + H("M1 2v5l5-5z");
const elbow = L("M1 2.500h7.500v11h7");
const elbowArrow = L("M1 2.500h6.500v10h6") + H("M12 9.500l4 3-4 3z");
const backHead = H("M4 0L0 2.500 4 5z");
const curl = L("M5 2.500h4q3 1 1 4l-3 3q-2 3 1 4h4");
const curlArrow = L("M3 2.500h3q4 1 2 4l-2 2q-2 3 1 4h6") + H("M12 9.500l4 3-4 3z");
const wave = L("M1 13C4 13 4 2 7 2s4 12 9 12");
const free = F("M2.500 13.500l-1-4 3-3 1-4h6v3l-3 2 5-1 1 3-1 4z");
const scribble = L("M5 1.500q-4 2-1 4 4-2 2 1-4 3 0 3 4-3 3 0-4 4 2 3 3 0 1 3");
const arc = L("M1 3.500q11 0 13 11");
const lbrace = L("M10 2l-2 1v4l-2 1.500L8 10v4l2 1");
const rbrace = flip(lbrace);
const right = F("M.5 5.500h7v-4l8 6.500-8 6.500v-4h-7z");
const both = F("M4.500 2.500L0 8l4.500 5.500V11h7v2.500L16 8l-4.500-5.500V5h-7z");
const quad = F("M8 0l3 3H9v4h4V5l3 3-3 3V9H9v4h2l-3 3-3-3h2V9H3v2L0 8l3-3v2h4V3H5z");
const tee = F("M8 1l3 3H9v6h4V8l3 3.500-3 3.500v-2H3v2l-3-3.500L3 8v2h4V4H5z");
const bent = F("M1.500 15V7q0-4.500 5-4.500h5V0L16 4.500 11.500 8V5.500h-5q-2 0-2 2V15z");
const uturn = F("M.5 14.500V7q1-4.500 6-4.500T12.500 7v3h3l-4 4.500-4-4.500H10V7q-1-2-3.500-2T3.500 7v7.500z");
const bentUp = F("M1.500 11.500h8v-6H7L11 1l4 4.500h-2.500v9h-11z");
const curved = F("M11 1Q3 2 3 7t6 6v2l4-3.500L9 8v2Q5 9 5.500 7T12 4z");
const can = F("M2.500 3.500v10q5.500 2.500 11 0v-10") + `<ellipse cx="8" cy="3.500" rx="5.500" ry="2"/>`;
const octagon = F("M5.500 .5h5l5 5v5l-5 5h-5l-5-5v-5z");
const banner = F("M.5 5.500h4v-2h7v2h4l-2 3.500 2 3.500h-5v-2h-5v2h-5L2.500 9z");
const bannerUp = F("M.5 3.500h4v8h7v-8h4l-2 4 2 4-4 2h-7l-4-2 2-4z");
const boxArrow = F("M.5 1.500h9v4h2v-2L16 8l-4.500 4.500v-2h-2v4h-9z");
const callLine = "M.5 13.500L6 4.500";
const box = F("M6.500 3.500h9v7h-9z");
const dotBox = D("M6.500 3.500h9v7h-9z");
const frame = F("M.5.5h15v15H.5z");

const sections = [
  ["Recently Used Shapes", [textBox, line, arrow, rect, E(7.5, 5), round, tri, elbow, elbowArrow, right, rot(90, right), free,
    scribble, arc, wave, lbrace, rbrace, star(5, 8, 3)]],
  ["Lines", [line, arrow, doubleArrow, elbow, elbowArrow, elbowArrow + backHead, curl, curlArrow, curlArrow + backHead, wave, free, scribble]],
  ["Rectangles", [rect, round, F("M.5 2.500h11l4 4v7h-15z"), F("M4.500 2.500h7l4 4v7h-15v-7z"), F("M.5 2.500h11l4 4v7h-11l-4-4z"),
    F("M2.500 2.500h9l4 4v7h-15v-9z"), F("M.5 2.500h13l2 2v9h-15z"), F("M2.500 2.500h11l2 2v9h-15v-9z"), F("M2.500 2.500h13v9l-2 2h-13v-9z")]],
  ["Basic Shapes", [textBox, E(7.5, 5), tri, F("M1.500 2v12.500H14z"), F("M5 2.500h10.500l-4 11H.5z"), F("M4.500 2.500h7l4 12H.5z"),
    F("M8 .5L15.500 8 8 15.500.5 8z"), F("M8 1.500l7.500 5.500-3 7.500h-9L.5 7z"), F("M4 2.500h8l3.500 5.500-3.500 6H4L.5 8z"),
    octagon + T("7"), octagon + T("8"), octagon + T("10"), octagon + T("12"),
    F("M8 .5A7.500 7.500 0 1 0 15.500 8H8z"), F("M6 1.500L15 9.500A7 7 0 1 1 6 1.500z"), F("M8 1.500h7.500V9A7.300 7 0 1 1 8 1.500z"),
    F("M.5 1.500h15v13H.5z") + F("M3.500 4.500h9v7h-9z"), F("M1.500 15V1.500H15L12 4.500H4.500V12z"), F("M2.500 1.500h4v7h8v6h-12z"),
    F("M1.500 14.500v-4l9-9h4l-13 13z"), F("M5.500 1.500h5v4h5v5h-5v4h-5v-4h-5v-5h5z"), F("M3.500 1.500h9v2h3v9h-3v2h-9v-2h-3v-9h3z"), can,
    F("M.5 5.500l4-4h11v9l-4 4H.5z") + L("M.5 5.500h11v9M11.500 5.500l4-4"),
    `<path d="M.5 2.500h15v12H.5z" fill="#8eacc9" stroke="#2a4568"/>` + F("M3.500 5.500h9v6h-9z"), C(7.5) + C(4), C(7.5) + C(4.5) + L("M5 5l6 6"),
    F("M.5 10.500v-2q2-6 7.500-6t7.500 6v2h-3q0-5-4.500-5t-4.500 5z"), F("M1.500 1.500h13v9l-4 4h-9zM14.500 10.500h-4v4"),
    C(7.5) + H("M5 4h2v3H5zM9 4h2v3H9z") + L("M4 10q4 4 8 0"), F("M8 14L1 7q-1-5 3-4.500 3 0 4 3 1-3 4-3 4-.5 3 4.500z"),
    F("M1 3l4-1.500 3 3h2l2 3.500h1l2 6-6-4h1l-4-3h1z") + L("M3 4l9 7"), star(8, 8, 6) + C(4), F("M11.500.5Q3 2 3 8t8.500 7.500Q7 12 7 8t4.500-7.500z"),
    F("M4 12q-4 0-3.500-4Q0 5 3.500 4.500 5 1.500 8 3q4-2 5 1 3 1 2 4 1 3-3 3-2 3-4 1-3 1-4 0z"), arc,
    L("M4 1.500l-3 2v9l3 2M12 1.500l3 2v9l-3 2"), L("M5 1.500L3 3v4L1 8.500 3 10v3l2 1.500M11 1.500L13 3v4l2 1.500L13 10v3l-2 1.500"),
    L("M6 1.500l-2 2v9l2 2"), L("M7 1.500l2 2v9l-2 2"), lbrace, rbrace]],
  ["Block Arrows", [right, rot(180, right), rot(-90, right), rot(90, right), both, rot(90, both), quad, tee, bent, uturn, bentUp, bentUp,
    curved, flip(curved), rot(-90, curved), flip(rot(-90, flip(curved))), F("M.5 5.500h1v5h-1zM3.500 5.500h4v-3l8 5.500-8 5.500v-3h-4z"),
    F("M1 5.500h7v-3l7.500 5.500L8 13.500v-3H1L3.500 8z"), F("M.5 3.500h10l5 4.500-5 4.500H.5z"), F("M1.500 3.500h6L14 8l-6.500 4.500h-6L6 8z"),
    boxArrow, rot(90, boxArrow), rot(180, boxArrow), rot(-90, boxArrow),
    F("M4.500 1.500h7v5h1V4L16 8l-3.500 4V9.500h-1v5h-7v-5h-1V12L0 8l3.500-4v2.500h1z"), quad + C(3), uturn]],
  ["Equation Shapes", [F("M6.500 1.500h3v5h5v3h-5v5h-3v-5h-5v-3h5z"), F("M1.500 6.500h13v3h-13z"), rot(45, F("M6.500.5h3v6h6v3h-6v6h-3v-6h-6v-3h6z")),
    F("M1.500 6.500h13v2h-13zM7 2.500h2v2H7zM7 11.500h2v2H7z"), F("M1.500 3.500h13v3h-13zM1.500 9.500h13v3h-13z"), F("M1.500 3.500h13v3h-13zM1.500 9.500h13v3h-13zM10 .5h3l-7 15H3z")]],
  ["Flowchart", [rect, round, F("M8 3.500L15.500 8 8 12.500.5 8z"), F("M4 2.500h11.500l-4 12H.5z"), F("M.5 2.500h15v12H.5z") + L("M3.500 2.500v12M12.500 2.500v12"),
    F("M1.500 2.500h13v12h-13z") + L("M4.500 2.500v12M1.500 5.500h13"), F("M.5 2.500h15v9q-5-2-8 1t-7 0z"),
    F("M5.500.5h10v8h-10z") + F("M3.500 2.500h10v8h-10z") + F("M.5 5.500h11v8H.5z"), F("M3.500 5.500h9L15.500 8l-3 3h-9L.5 8.500z"), F("M4 3.500h8l3.500 4.500-3.500 5H4L.5 8z"),
    F("M.5 7.500l15-4v9H.5z"), F("M.5 2.500h15l-4 12h-7z"), C(4.5), F("M3.500 3.500h10v6l-5 4-5-4z"), F("M3.500 2.500h12v12H.5v-9z"),
    F("M.5 2.500q4 3 7.500 1t7.500-1v11q-4-2-7.500 1t-7.500-1z"), C(7.5) + L("M3 3l10 10M13 3L3 13"), C(7.5) + L("M.5 8h15M8 .5v15"),
    F("M5 1.500h6l-5 13h5z"), F("M8 .5L12 8l-4 7.500L4 8z") + L("M4 8h8"), F("M8 1.500l7 13H1z"), F("M1 1.500h14l-7 13z"),
    F("M4 2.500h11.500q-5 5.500 0 11H4q-6-5.500 0-11z"), F("M1.500 1.500h6q7 1 7 6.500t-7 6.500h-6z"),
    F("M7.500 1.500a6.500 6.500 0 1 0 0 13h8v-2H12q5-7-4.500-11z"), can, F("M3.500 2.500h10q3 6 0 12h-10q-5-6 0-12zM12.500 2.500q-3 6 0 12"), F("M4.500 1.500h7l4 6.500-4 7h-7l-4-7z")]],
  ["Stars and Banners", [star(10, 8, 4), star(12, 8, 5), star(4, 8, 2), star(5, 8, 3), star(6, 8, 5), star(7, 8, 5.5), star(8, 8, 6.5) + T("8"),
    star(10, 8, 6.5) + T("10"), star(12, 8, 6.5) + T("12"), star(16, 8, 6.5) + T("16"), star(18, 8, 6.5) + T("24"), star(20, 8, 6.5) + T("32"),
    banner, rot(180, banner), rot(180, bannerUp), bannerUp, F("M3.500 2.500q1-2 3-2h9v3h-3v10q0 2-3 2h-9v-3h3zM5 3.500h8"),
    F("M.5 4.500q1-1 3-1h9q0-2 2-2t1 3v8h-12v2h-3z") + L("M3.500 4v9"), F("M.5 4.500q4-4 7.500 0t7.500 0v8q-4 4-7.500 0t-7.500 1z"), F("M.5 3.500q3-2 5 1 2.500-4 5 0 2-3 5-1v10q-3-2-5 0-2.500-4-5 0-2-3-5 0z")]],
  ["Callouts", [F("M1.500 2.500h13v9h-6l-3 4v-4h-4z"), F("M3.500 2.500h9l2 2v6l-2 2h-4l-3 3v-3h-2l-2-2v-6z"), F("M4 15v-3Q-2 8 3 4t10 0q5 5-2 8-3 1-5 0z"),
    F("M4 11q-5-1-3-4-1-4 3-4 2-3 5-1 4-1 5 2 3 2 0 5-2 3-5 2-3 2-5 0z") + C(1, 4, 14), box + L(callLine), box + L("M0 13l2-6h4"), box + L("M6 6.500H1.500v6l5 3"),
    dotBox + L(callLine), dotBox + L("M0 13l2-6h4M5.500 3v8"), dotBox + L("M6 6.500H1.500v6l5 3"), dotBox + L("M0 14L7 5"), dotBox + L("M0 13l2-6h4"),
    dotBox + L("M6 6.500H1.500v6l5 3"), box + L(callLine + "M8.500 3v8"), box + L("M0 13l2-6h4M8.500 3v8"), box + L("M6 6.500H1.500v6l5 3M8.500 3v8")]],
  ["Action Buttons", [F("M.5.5h15v15H.5zM12 4v8L3.500 8z"), F("M.5.5h15v15H.5zM4 4v8l8.500-4z"), F("M.5.5h15v15H.5zM12 4v8L6.500 8zM4.500 4v8"),
    F("M.5.5h15v15H.5zM4 4v8l5.500-4zM11.500 4v8"), frame + F("M4.500 8v4.500h7V8M3 8.500L8 3.500l5 5zM11.500 3v3M6.500 12.500v-3h3v3"), frame + C(5) + L("M8 7v4M8 4.500v1.500M6.500 11h3"),
    frame + L("M4 7q0 5 4 5t3-6M3 8l2-2 2 2M8 9h2V5h2"), frame + F("M3.500 5.500h6v5h-6zM9.500 7l3-1v4l-3-1"), frame + F("M4.500 3.500h5l2 2v7h-7zM9 3.500v2.500h3"),
    frame + F("M3.500 6.500h2l3-3v9l-3-3h-2z") + L("M10 8h3M10 5.500l3-2M10 10.500l3 2"), frame + L("M5 6q0-2.500 3-2.500T11 6q0 1.500-3 3v1.500M8 12v1.500"), frame]],
];

document.getElementById("gallery").innerHTML = sections.map(([title, icons]) => {
  const plain = title === "Action Buttons";
  const buttons = icons.map((icon, i) =>
    `<button type="button"${plain && i === 4 ? ' class="hover"' : ""} aria-label="${title} ${i + 1}"><svg viewBox="0 0 16 16">${icon}</svg></button>`);
  return `<h3>${title}</h3><div class="gallery-grid${plain ? " plain" : ""}">${buttons.join("")}</div>`;
}).join("");
```
